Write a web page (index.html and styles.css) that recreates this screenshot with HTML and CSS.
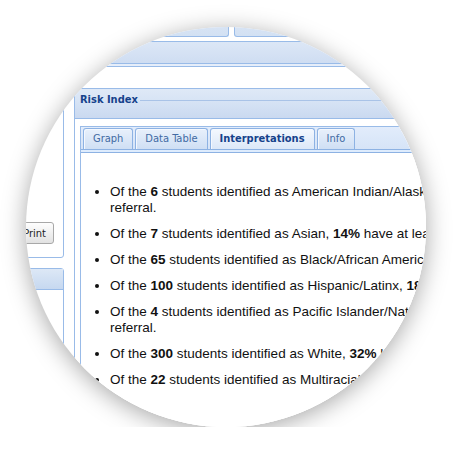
FILE: index.html
```html
<!DOCTYPE html>
<html>
<head>
<meta charset="utf-8">
<link rel="stylesheet" href="styles.css">
</head>
<body>
<div class="lens">
  <div class="app">
    <div class="toolbar">
      <div class="btnrow">
        <div class="tbtn tbtn-a"></div>
        <div class="tbtn tbtn-b"></div>
      </div>
      <div class="band"></div>
      <div class="band-edge"></div>
    </div>
    <div class="main">
      <aside class="side">
        <div class="side-panel side-top">
          <button class="print">Print</button>
        </div>
        <div class="side-panel side-bottom">
          <div class="side-head"></div>
        </div>
      </aside>
      <section class="risk">
        <div class="risk-head"><span class="risk-title">Risk Index</span><span class="rule"></span></div>
        <div class="risk-body">
          <div class="tabpanel">
            <div class="tabstrip">
              <div class="tab">Graph</div>
              <div class="tab">Data Table</div>
              <div class="tab active">Interpretations</div>
              <div class="tab">Info</div>
            </div>
            <div class="tab-spacer"></div>
            <div class="tab-body">
              <ul class="facts">
                <li>Of the <b>6</b> students identified as American Indian/Alaska Native, <b>17%</b> have at least one referral.</li>
                <li>Of the <b>7</b> students identified as Asian, <b>14%</b> have at least one referral.</li>
                <li>Of the <b>65</b> students identified as Black/African American, <b>20%</b> have at least one referral.</li>
                <li>Of the <b>100</b> students identified as Hispanic/Latinx, <b>18%</b> have at least one referral.</li>
                <li>Of the <b>4</b> students identified as Pacific Islander/Native Hawaiian, <b>25%</b> have at least one referral.</li>
                <li>Of the <b>300</b> students identified as White, <b>32%</b> have at least one referral.</li>
                <li>Of the <b>22</b> students identified as Multiracial, <b>9%</b> have at least one referral.</li>
              </ul>
            </div>
          </div>
        </div>
      </section>
    </div>
  </div>
</div>
</body>
</html>
```

FILE: styles.css
```css
html, body {
  margin: 0;
  padding: 0;
  background: #fff;
  overflow: hidden;
}

.lens {
  width: 400px;
  height: 400px;
  margin: 27px 0 0 26px;
  border-radius: 50%;
  overflow: hidden;
  background: #fff;
  box-shadow: 0 4px 24px rgba(0, 0, 0, 0.35);
}

.app {
  margin: -20px 0 0 -40px;
  width: 760px;
  font-family: "DejaVu Sans Condensed", "DejaVu Sans", sans-serif;
  font-stretch: condensed;
  font-size: 11px;
}

/* top toolbar */
.btnrow {
  display: flex;
  gap: 5px;
  height: 30px;
  padding-left: 34px;
}
.tbtn {
  box-sizing: border-box;
  height: 30px;
  border: 1px solid #99bbe8;
  border-top: none;
  border-radius: 0 0 3px 3px;
  background: linear-gradient(#dfe8f6, #d3e1f3);
}
.tbtn-a { width: 209px; }
.tbtn-b { width: 300px; }

.band {
  margin-top: 4px;
  height: 21px;
  border-top: 1px solid #99bbe8;
  border-bottom: 1px solid #99bbe8;
  background: linear-gradient(#dce7f6, #cfddf2);
}
.band-edge {
  height: 2px;
  background: #e6eefa;
  border-bottom: 1px solid #99bbe8;
}

/* main area */
.main {
  display: flex;
  gap: 10px;
  margin-top: 21px;
}

.side {
  width: 78px;
  flex: none;
}
.side-panel {
  box-sizing: border-box;
  border: 1px solid #99bbe8;
}
.side-top {
  height: 170px;
  border-radius: 0 0 3px 3px;
  display: flex;
  justify-content: flex-end;
  align-items: flex-end;
  padding: 0 9px 13px 0;
}
.print {
  height: 22px;
  padding: 0 7px 0 10px;
  font: inherit;
  color: #222;
  border: 1px solid #a8a8a8;
  border-radius: 3px;
  background: linear-gradient(#fefefe, #e2e2e2);
}
.side-bottom {
  margin-top: 10px;
  height: 260px;
  border-radius: 3px 3px 0 0;
}
.side-head {
  height: 20px;
  border-bottom: 1px solid #99bbe8;
  background: linear-gradient(#dde8f6, #c6d8f0);
}

.risk {
  flex: 1;
  border-top: 1px solid #99bbe8;
  border-left: 1px solid #99bbe8;
}
.risk-head {
  box-sizing: border-box;
  height: 30px;
  display: flex;
  align-items: flex-start;
  padding: 4px 0 0 5px;
  border-bottom: 1px solid #99bbe8;
  background: linear-gradient(#dfe9f7, #d7e4f5 40%, #cad9f0);
}
.risk-title {
  line-height: 14px;
  font-weight: bold;
  color: #15428b;
}
.rule {
  flex: 1;
  height: 1px;
  margin-top: 7px;
  margin-left: 2px;
  background: #a9c3e7;
}
.risk-body {
  padding: 7px 0 0 5px;
  background: #fff;
}

.tabpanel {
  border-top: 1px solid #99bbe8;
  border-left: 1px solid #99bbe8;
}
.tabstrip {
  display: flex;
  gap: 2px;
  padding: 1px 0 0 2px;
  background: linear-gradient(#e2ecfb, #d6e4f7);
  border-bottom: 1px solid #8db2e3;
}
.tab {
  box-sizing: border-box;
  height: 21px;
  line-height: 20px;
  padding: 0 9px;
  color: #416aa3;
  border: 1px solid #8db2e3;
  border-bottom: none;
  border-radius: 3px 3px 0 0;
  background: linear-gradient(#e8f0fb, #cfdff4);
  box-shadow: inset 1px 1px 0 #f4f8fe;
}
.tab.active {
  font-weight: bold;
  color: #15428b;
  background: linear-gradient(#f4f8fe, #dce8f8);
}
.tab-spacer {
  height: 2px;
  background: #deecfd;
  border-bottom: 1px solid #8db2e3;
}
.tab-body {
  background: #fff;
  padding: 31px 0 0 29px;
  height: 400px;
}

.facts {
  margin: 0;
  padding: 0;
  width: 540px;
  font-family: "Liberation Sans", Arial, sans-serif;
  font-size: 13.5px;
  line-height: 16px;
  color: #111;
}
.facts li {
  margin-bottom: 10px;
}
```
